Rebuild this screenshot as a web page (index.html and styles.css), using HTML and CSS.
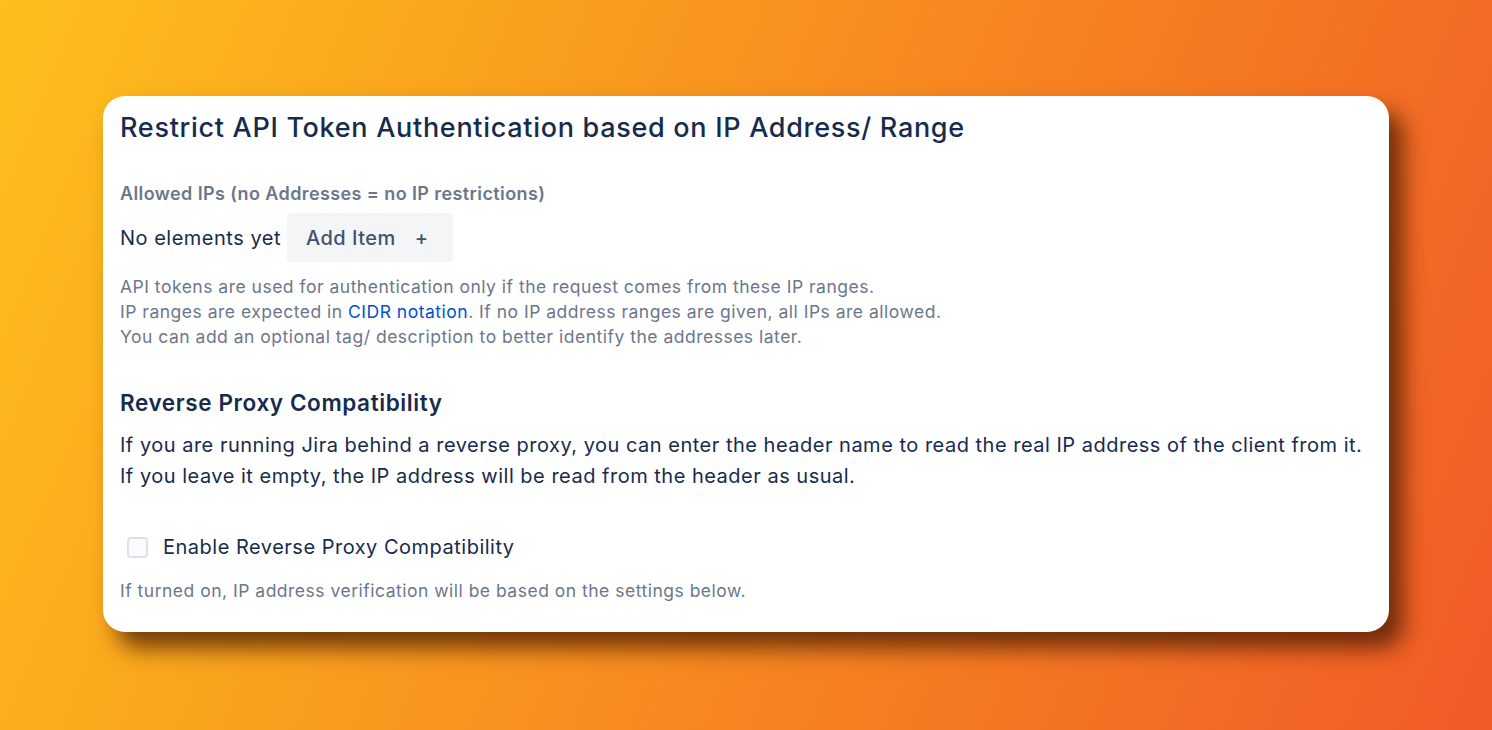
FILE: index.html
```html
<!DOCTYPE html>
<html lang="en">
<head>
    <meta charset="UTF-8">
    <title>API Token Authentication</title>
    <link rel="stylesheet" href="styles.css">
</head>
<body>
    <div class="card">
        <h1>Restrict API Token Authentication based on IP Address/ Range</h1>

        <div class="field">
            <div class="field-label">Allowed IPs (no Addresses = no IP restrictions)</div>
            <div class="items-row">
                <span class="empty">No elements yet</span>
                <button class="btn-add">Add Item <span class="plus">+</span></button>
            </div>
            <p class="help">
                API tokens are used for authentication only if the request comes from these IP ranges.<br>
                IP ranges are expected in <a href="#" class="link">CIDR notation</a>. If no IP address ranges are given, all IPs are allowed.<br>
                You can add an optional tag/ description to better identify the addresses later.
            </p>
        </div>

        <h2>Reverse Proxy Compatibility</h2>
        <p class="text">
            If you are running Jira behind a reverse proxy, you can enter the header name to read the real IP address of the client from it.<br>
            If you leave it empty, the IP address will be read from the header as usual.
        </p>

        <label class="check">
            <span class="check-box"></span>
            <span>Enable Reverse Proxy Compatibility</span>
        </label>
        <p class="help">If turned on, IP address verification will be based on the settings below.</p>
    </div>
</body>
</html>
```

FILE: styles.css
```css
:root {
    --text-color: #172b4d;
    --muted-color: #6b778c;
    --link-color: #0052cc;
}

* {
    margin: 0;
    padding: 0;
    box-sizing: border-box;
}

body {
    font-family: Inter, "Noto Sans", sans-serif;
    color: var(--text-color);
    min-height: 730px;
    padding: 96px 0 0 103px;
    background: linear-gradient(112deg, #fdbf1c 0%, #f78c1f 50%, #f05a27 100%);
}

.card {
    width: 1286px;
    height: 536px;
    background: #fff;
    border-radius: 22px;
    padding: 15px 17px 14px;
    box-shadow: 14px 16px 22px rgba(70, 25, 0, 0.75);
}

h1 {
    font-size: 27px;
    font-weight: 500;
    letter-spacing: 0.7px;
    line-height: 34px;
    margin-bottom: 37px;
}

.field-label {
    font-size: 18px;
    font-weight: 600;
    letter-spacing: 0.4px;
    color: var(--muted-color);
    line-height: 24px;
    margin-bottom: 7px;
}

.items-row {
    display: flex;
    align-items: center;
    gap: 6px;
    margin-bottom: 12px;
}

.empty {
    font-size: 20px;
    letter-spacing: 0.5px;
}

.btn-add {
    font-family: inherit;
    font-size: 20px;
    font-weight: 500;
    letter-spacing: 0.5px;
    color: #42526e;
    background: #f4f5f7;
    border: none;
    border-radius: 4px;
    height: 49px;
    padding: 0 24px 0 19px;
}

.plus {
    margin-left: 13px;
}

.help {
    font-size: 17.5px;
    letter-spacing: 0.5px;
    line-height: 25px;
    color: var(--muted-color);
}

.link {
    color: var(--link-color);
    text-decoration: none;
}

h2 {
    font-size: 22.5px;
    font-weight: 600;
    letter-spacing: 0.6px;
    line-height: 30px;
    margin-top: 39px;
    margin-bottom: 12px;
}

.text {
    font-size: 20px;
    letter-spacing: 0.5px;
    line-height: 31px;
    margin-bottom: 43px;
}

.check {
    display: flex;
    align-items: center;
    gap: 15px;
    font-size: 20px;
    letter-spacing: 0.5px;
    padding-left: 7px;
    margin-bottom: 19px;
}

.check-box {
    width: 21px;
    height: 21px;
    border: 2px solid #dfe1e6;
    background: #fafbfc;
    border-radius: 4px;
}
```
